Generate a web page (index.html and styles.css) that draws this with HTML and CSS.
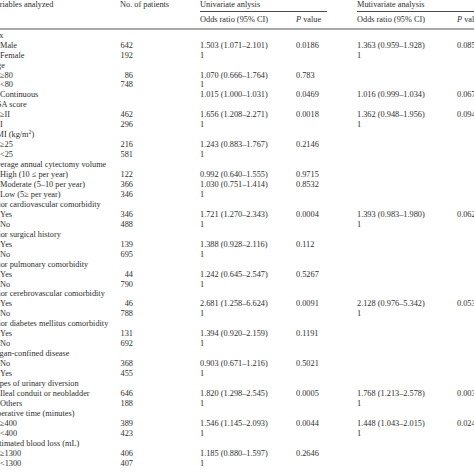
FILE: index.html
```html
<!DOCTYPE html>
<html lang="en">
<head>
<meta charset="utf-8">
<title>Table</title>
<link rel="stylesheet" href="styles.css">
</head>
<body>
<div class="table">
  <div class="head">
    <div class="row top">
      <span class="cell grp">Variables analyzed</span>
      <span class="cell">No. of patients</span>
      <span class="cell span uni">Univariate anlysis</span>
      <span class="cell span multi">Mutivariate analysis</span>
    </div>
    <div class="row sub">
      <span class="cell"></span>
      <span class="cell"></span>
      <span class="cell">Odds ratio (95% CI)</span>
      <span class="cell"><i>P</i> value</span>
      <span class="cell">Odds ratio (95% CI)</span>
      <span class="cell"><i>P</i> value</span>
    </div>
  </div>
  <div class="body">
    <div class="row"><span class="cell grp">Sex</span></div>
    <div class="row"><span class="cell it">Male</span><span class="cell n">642</span><span class="cell">1.503 (1.071–2.101)</span><span class="cell">0.0186</span><span class="cell">1.363 (0.959–1.928)</span><span class="cell">0.0855</span></div>
    <div class="row"><span class="cell it">Female</span><span class="cell n">192</span><span class="cell">1</span><span class="cell"></span><span class="cell">1</span></div>
    <div class="row"><span class="cell grp">Age</span></div>
    <div class="row"><span class="cell it">≥80</span><span class="cell n">86</span><span class="cell">1.070 (0.666–1.764)</span><span class="cell">0.783</span></div>
    <div class="row"><span class="cell it">&lt;80</span><span class="cell n">748</span><span class="cell">1</span></div>
    <div class="row"><span class="cell it">Continuous</span><span class="cell n"></span><span class="cell">1.015 (1.000–1.031)</span><span class="cell">0.0469</span><span class="cell">1.016 (0.999–1.034)</span><span class="cell">0.0674</span></div>
    <div class="row"><span class="cell grp">ASA score</span></div>
    <div class="row"><span class="cell it">≥II</span><span class="cell n">462</span><span class="cell">1.656 (1.208–2.271)</span><span class="cell">0.0018</span><span class="cell">1.362 (0.948–1.956)</span><span class="cell">0.0942</span></div>
    <div class="row"><span class="cell it">I</span><span class="cell n">296</span><span class="cell">1</span><span class="cell"></span><span class="cell">1</span></div>
    <div class="row"><span class="cell grp">BMI (kg/m<sup>2</sup>)</span></div>
    <div class="row"><span class="cell it">≥25</span><span class="cell n">216</span><span class="cell">1.243 (0.883–1.767)</span><span class="cell">0.2146</span></div>
    <div class="row"><span class="cell it">&lt;25</span><span class="cell n">581</span><span class="cell">1</span></div>
    <div class="row"><span class="cell grp">Average annual cytectomy volume</span></div>
    <div class="row"><span class="cell it">High (10 ≤ per year)</span><span class="cell n">122</span><span class="cell">0.992 (0.640–1.555)</span><span class="cell">0.9715</span></div>
    <div class="row"><span class="cell it">Moderate (5–10 per year)</span><span class="cell n">366</span><span class="cell">1.030 (0.751–1.414)</span><span class="cell">0.8532</span></div>
    <div class="row"><span class="cell it">Low (5≥ per year)</span><span class="cell n">346</span><span class="cell">1</span></div>
    <div class="row"><span class="cell grp">Prior cardiovascular comorbidity</span></div>
    <div class="row"><span class="cell it">Yes</span><span class="cell n">346</span><span class="cell">1.721 (1.270–2.343)</span><span class="cell">0.0004</span><span class="cell">1.393 (0.983–1.980)</span><span class="cell">0.0623</span></div>
    <div class="row"><span class="cell it">No</span><span class="cell n">488</span><span class="cell">1</span><span class="cell"></span><span class="cell">1</span></div>
    <div class="row"><span class="cell grp">Prior surgical history</span></div>
    <div class="row"><span class="cell it">Yes</span><span class="cell n">139</span><span class="cell">1.388 (0.928–2.116)</span><span class="cell">0.112</span></div>
    <div class="row"><span class="cell it">No</span><span class="cell n">695</span><span class="cell">1</span></div>
    <div class="row"><span class="cell grp">Prior pulmonary comorbidity</span></div>
    <div class="row"><span class="cell it">Yes</span><span class="cell n">44</span><span class="cell">1.242 (0.645–2.547)</span><span class="cell">0.5267</span></div>
    <div class="row"><span class="cell it">No</span><span class="cell n">790</span><span class="cell">1</span></div>
    <div class="row"><span class="cell grp">Prior cerebrovascular comorbidity</span></div>
    <div class="row"><span class="cell it">Yes</span><span class="cell n">46</span><span class="cell">2.681 (1.258–6.624)</span><span class="cell">0.0091</span><span class="cell">2.128 (0.976–5.342)</span><span class="cell">0.0531</span></div>
    <div class="row"><span class="cell it">No</span><span class="cell n">788</span><span class="cell">1</span><span class="cell"></span><span class="cell">1</span></div>
    <div class="row"><span class="cell grp">Prior diabetes mellitus comorbidity</span></div>
    <div class="row"><span class="cell it">Yes</span><span class="cell n">131</span><span class="cell">1.394 (0.920–2.159)</span><span class="cell">0.1191</span></div>
    <div class="row"><span class="cell it">No</span><span class="cell n">692</span><span class="cell">1</span></div>
    <div class="row"><span class="cell grp">Organ-confined disease</span></div>
    <div class="row"><span class="cell it">No</span><span class="cell n">368</span><span class="cell">0.903 (0.671–1.216)</span><span class="cell">0.5021</span></div>
    <div class="row"><span class="cell it">Yes</span><span class="cell n">455</span><span class="cell">1</span></div>
    <div class="row"><span class="cell grp">Types of urinary diversion</span></div>
    <div class="row"><span class="cell it">Ileal conduit or neobladder</span><span class="cell n">646</span><span class="cell">1.820 (1.298–2.545)</span><span class="cell">0.0005</span><span class="cell">1.768 (1.213–2.578)</span><span class="cell">0.0032</span></div>
    <div class="row"><span class="cell it">Others</span><span class="cell n">188</span><span class="cell">1</span><span class="cell"></span><span class="cell">1</span></div>
    <div class="row"><span class="cell grp">Operative time (minutes)</span></div>
    <div class="row"><span class="cell it">≥400</span><span class="cell n">389</span><span class="cell">1.546 (1.145–2.093)</span><span class="cell">0.0044</span><span class="cell">1.448 (1.043–2.015)</span><span class="cell">0.0245</span></div>
    <div class="row"><span class="cell it">&lt;400</span><span class="cell n">423</span><span class="cell">1</span><span class="cell"></span><span class="cell">1</span></div>
    <div class="row"><span class="cell grp">Estimated blood loss (mL)</span></div>
    <div class="row"><span class="cell it">≥1300</span><span class="cell n">406</span><span class="cell">1.185 (0.880–1.597)</span><span class="cell">0.2646</span></div>
    <div class="row"><span class="cell it">&lt;1300</span><span class="cell n">407</span><span class="cell">1</span></div>
  </div>
</div>
</body>
</html>
```

FILE: styles.css
```css
html, body {
  margin: 0;
  padding: 0;
  background: #ffffff;
}
body {
  width: 474px;
  height: 474px;
  overflow: hidden;
  font-family: "Liberation Serif", "Times New Roman", serif;
  font-size: 8.3px;
  color: #2e2e2e;
}
.table {
  margin-left: -9px;
  width: 570px;
}
.row {
  display: grid;
  grid-template-columns: 129px 80px 96px 61px 100px 100px;
  height: 9.96px;
  line-height: 9.96px;
  white-space: nowrap;
}
.it {
  padding-left: 9px;
}
.n {
  width: 13px;
  text-align: right;
}
.head .row.top {
  height: auto;
  line-height: 10px;
}
.head .row.top .cell {
  padding-bottom: 0.5px;
}
.span {
  grid-column: span 2;
  border-bottom: 1px solid #4a4a4a;
}
.uni {
  margin-right: 30px;
}
.head .row.sub {
  height: auto;
  line-height: 10px;
  padding: 3px 0 3px;
  border-bottom: 2px solid #a9a9a9;
}
.body {
  padding-top: 1.2px;
}
sup {
  font-size: 70%;
  line-height: 0;
  vertical-align: 3px;
}
```
